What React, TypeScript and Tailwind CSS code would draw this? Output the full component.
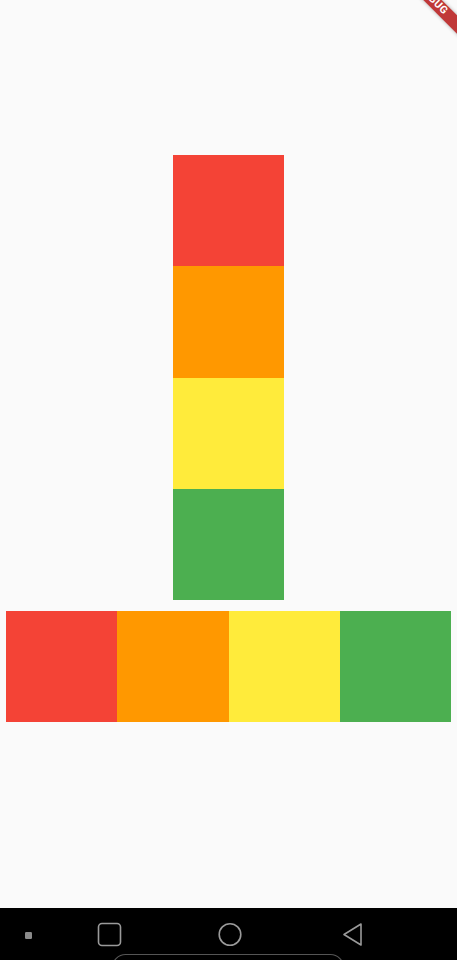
import React from "react";

const colors = ["bg-[#F44336]", "bg-[#FF9800]", "bg-[#FFEB3B]", "bg-[#4CAF50]"];

export default function App() {
  return (
    <div className="relative w-[457px] h-[960px] bg-[#FAFAFA] overflow-hidden flex flex-col" style={{ fontFamily: "Roboto, 'Noto Sans', sans-serif" }}>
      <main className="flex-1 flex flex-col items-center pt-[155px] gap-[11px]">
        <div className="flex flex-col">
          {colors.map((c) => (
            <div key={c} className={`w-[111px] h-[111.25px] ${c}`} />
          ))}
        </div>
        <div className="flex w-full px-[6px]">
          {colors.map((c) => (
            <div key={c} className={`flex-1 h-[111px] ${c}`} />
          ))}
        </div>
      </main>
      <nav className="h-[52px] bg-black shrink-0">
        <svg width="457" height="52" viewBox="0 0 457 52" fill="none">
          <rect x="25" y="24" width="7" height="7" rx="1.2" fill="#8a8a8a" />
          <rect x="98.5" y="15.5" width="22" height="22" rx="3.5" stroke="#9a9a9a" strokeWidth="1.6" />
          <circle cx="230" cy="26.5" r="10.8" stroke="#9a9a9a" strokeWidth="1.6" />
          <path d="M361 16 L344 26.5 L361 37 Z" stroke="#9a9a9a" strokeWidth="1.6" strokeLinejoin="round" />
          <rect x="112.5" y="46.5" width="231" height="30" rx="13" stroke="#555" strokeWidth="1.2" />
        </svg>
      </nav>
      <div className="absolute left-[383px] top-[-6.5px] w-[100px] h-[13px] rotate-45 bg-[#B71C1CE0] shadow-[0_0_4px_rgba(0,0,0,0.3)] flex items-center justify-center">
        <span className="text-white font-bold text-[10.5px] leading-none tracking-[0.5px]">DEBUG</span>
      </div>
    </div>
  );
}
